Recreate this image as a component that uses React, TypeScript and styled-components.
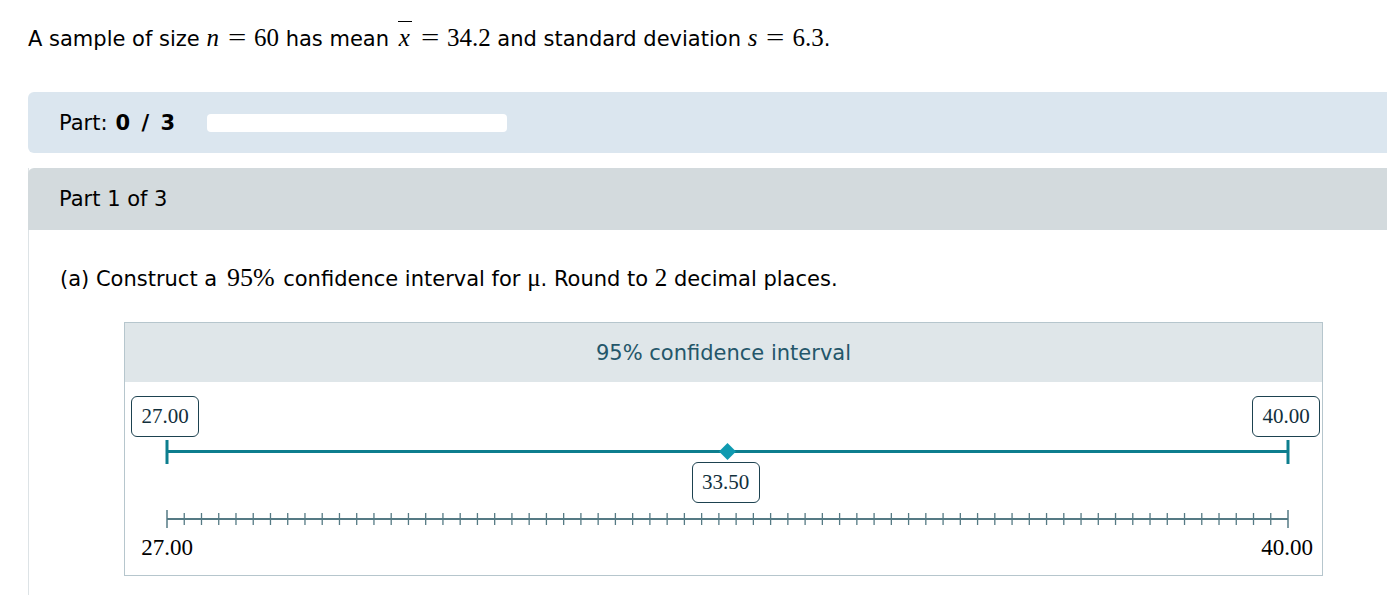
import React from "react";
import styled, { createGlobalStyle } from "styled-components";

const Global = createGlobalStyle`
  html, body { margin: 0; padding: 0; background: #ffffff; }
  body { font-family: "DejaVu Sans", Verdana, sans-serif; color: #000; overflow: hidden; }
`;

const Page = styled.div`
  padding: 21px 0 0 28px;
  width: 1400px;
`;

const Intro = styled.p`
  margin: 0;
  font-size: 21px;
  line-height: 34px;
`;

const M = styled.span<{ $it?: boolean; $size?: number }>`
  font-family: "Liberation Serif", "Times New Roman", serif;
  font-size: ${(p) => p.$size ?? 25}px;
  font-style: ${(p) => (p.$it ? "italic" : "normal")};
`;

const QM = styled(M)`
  margin: 0 2px 0 3px;
`;

const Op = styled(M)`
  display: inline-block;
  margin: 0 10px 0 11px;
  transform: scaleX(1.3);
`;

const Bar = styled.span`
  display: inline-block;
  border-top: 1.5px solid #000;
  line-height: 18px;
  padding: 7px 2px 0 1px;
  margin-left: 2px;
`;

const ProgressBar = styled.div`
  margin-top: 36px;
  height: 61px;
  background: #dbe6ef;
  border-radius: 6px 0 0 6px;
  display: flex;
  align-items: center;
  padding-left: 31px;
  font-size: 21px;
`;

const Strong = styled.b`
  font-weight: 700;
  margin-left: 8px;
  letter-spacing: 2px;
`;

const Track = styled.div`
  width: 300px;
  height: 18px;
  background: #ffffff;
  border-radius: 4px;
  margin-left: 30px;
`;

const PartSection = styled.section`
  margin-top: 15px;
  border-left: 1px solid #dde3e6;
`;

const PartHeader = styled.div`
  height: 62px;
  background: #d3dadd;
  display: flex;
  align-items: center;
  padding-left: 31px;
  font-size: 21px;
  margin-left: -1px;
  border-radius: 6px 0 0 0;
`;

const PartBody = styled.div`
  padding: 29px 0 20px 31px;
`;

const Question = styled.p`
  margin: 0;
  font-size: 21px;
  line-height: 38px;
`;

const ChartBox = styled.div`
  margin: 24px 0 0 64px;
  width: 1197px;
  border: 1px solid #b6c6cd;
  background: #fff;
`;

const ChartHead = styled.div`
  height: 58px;
  background: #dfe6e9;
  display: flex;
  align-items: center;
  justify-content: center;
  font-size: 21px;
  color: #24566a;
  padding-top: 1px;
`;

const Canvas = styled.div`
  position: relative;
  height: 193px;
`;

const Svg = styled.svg`
  position: absolute;
  left: 0;
  top: 0;
`;

const ValueBox = styled.div<{ $top: number }>`
  position: absolute;
  top: ${(p) => p.$top}px;
  width: 66px;
  height: 39px;
  border: 1px solid #1d4250;
  border-radius: 6px;
  background: #fff;
  display: flex;
  align-items: center;
  justify-content: center;
  font-family: "Liberation Serif", "Times New Roman", serif;
  font-size: 21px;
  color: #12303c;
  transform: translateX(-50%);
`;

const AxisLabel = styled.div`
  position: absolute;
  top: 153px;
  font-family: "Liberation Serif", "Times New Roman", serif;
  font-size: 23px;
  color: #000;
  transform: translateX(-50%);
`;

const W = 1197;
const X0 = 42;
const X1 = 1163;
const MIN = 27;
const MAX = 40;
const toX = (v: number) => X0 + ((v - MIN) / (MAX - MIN)) * (X1 - X0);

export default function App() {
  const ticks: number[] = [];
  for (let i = 1; i < 65; i++) ticks.push(toX(MIN + i * 0.2));
  const mid = toX(33.5);
  return (
    <>
      <Global />
      <Page>
        <Intro>
          A sample of size <M $it>n</M>
          <Op>=</Op>
          <M>60</M> has mean <M $it><Bar>x</Bar></M>
          <Op>=</Op>
          <M>34.2</M> and standard deviation <M $it>s</M>
          <Op>=</Op>
          <M>6.3</M>.
        </Intro>
        <ProgressBar>
          Part:<Strong>0 / 3</Strong>
          <Track />
        </ProgressBar>
        <PartSection>
          <PartHeader>Part 1 of 3</PartHeader>
          <PartBody>
            <Question>
              (a) Construct a <QM $size={26}>95%</QM> confidence interval for <M>μ</M>. Round to <M>2</M> decimal places.
            </Question>
            <ChartBox>
              <ChartHead>95% confidence interval</ChartHead>
              <Canvas>
                <Svg width={W} height={193}>
                  <line x1={X0} y1={69.5} x2={X1} y2={69.5} stroke="#0d7e8e" strokeWidth={3} />
                  <line x1={X0} y1={58} x2={X0} y2={82} stroke="#0d7e8e" strokeWidth={3} />
                  <line x1={X1} y1={58} x2={X1} y2={82} stroke="#0d7e8e" strokeWidth={3} />
                  <rect x={mid - 6} y={63.5} width={12} height={12} fill="#0f9ab0" transform={`rotate(45 ${mid} 69.5)`} />
                  <line x1={X0} y1={137} x2={X1} y2={137} stroke="#557a84" strokeWidth={2} />
                  <line x1={X0} y1={128} x2={X0} y2={146} stroke="#557a84" strokeWidth={1.5} />
                  <line x1={X1} y1={128} x2={X1} y2={146} stroke="#557a84" strokeWidth={1.5} />
                  {ticks.map((x, i) => (
                    <line key={i} x1={x} y1={131} x2={x} y2={143} stroke="#557a84" strokeWidth={1.3} />
                  ))}
                </Svg>
                <ValueBox $top={14} style={{ left: X0 - 2 }}>27.00</ValueBox>
                <ValueBox $top={14} style={{ left: X1 - 2 }}>40.00</ValueBox>
                <ValueBox $top={80} style={{ left: mid - 2 }}>33.50</ValueBox>
                <AxisLabel style={{ left: X0 }}>27.00</AxisLabel>
                <AxisLabel style={{ left: X1 - 1 }}>40.00</AxisLabel>
              </Canvas>
            </ChartBox>
          </PartBody>
        </PartSection>
      </Page>
    </>
  );
}
